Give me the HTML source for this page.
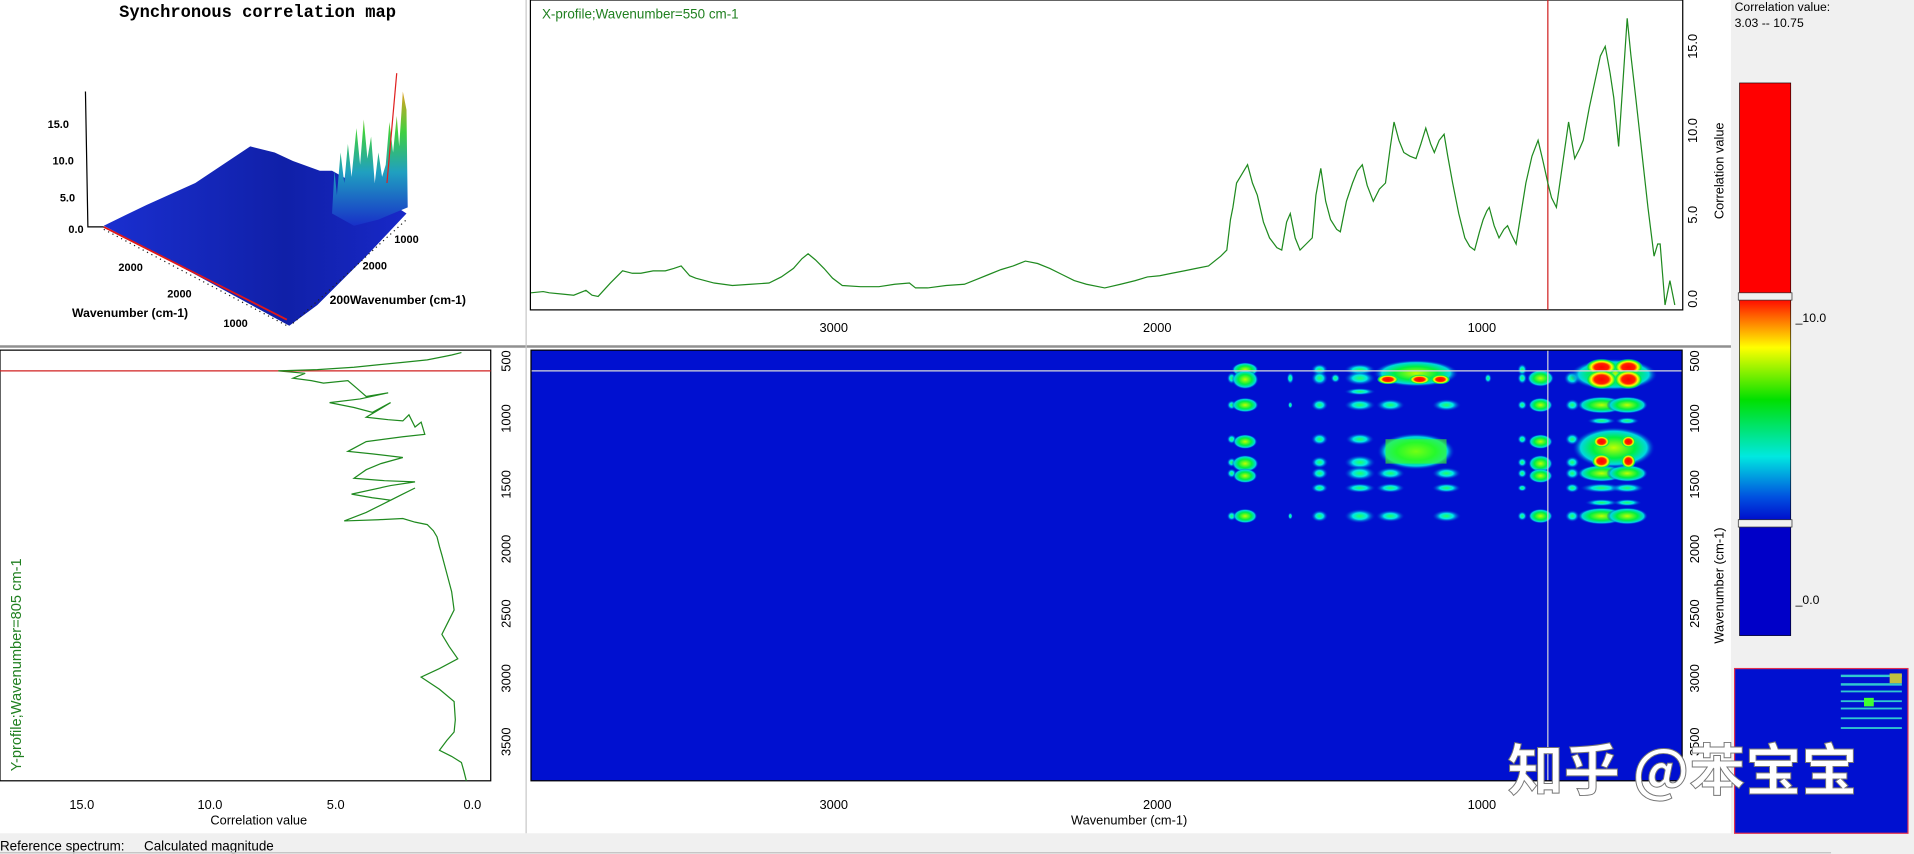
<!DOCTYPE html>
<html><head><meta charset="utf-8"><style>
html,body{margin:0;padding:0;background:#fff;width:1914px;height:854px;overflow:hidden}
svg{display:block}
text{font-family:"Liberation Sans",sans-serif}
</style></head><body>
<svg width="1914" height="854" viewBox="0 0 1914 854" xmlns="http://www.w3.org/2000/svg">
<defs>
<radialGradient id="cy"><stop offset="0" stop-color="#20ff60"/><stop offset="0.45" stop-color="#00e8e8"/><stop offset="1" stop-color="#0010d0" stop-opacity="0"/></radialGradient>
<radialGradient id="gr"><stop offset="0" stop-color="#c0ff00"/><stop offset="0.5" stop-color="#00f040"/><stop offset="0.8" stop-color="#00d8e0"/><stop offset="1" stop-color="#0010d0" stop-opacity="0"/></radialGradient>
<radialGradient id="rd"><stop offset="0" stop-color="#ff0000"/><stop offset="0.45" stop-color="#ff2000"/><stop offset="0.65" stop-color="#ffff00"/><stop offset="0.85" stop-color="#00f040"/><stop offset="1" stop-color="#00d0e0" stop-opacity="0"/></radialGradient>
<linearGradient id="cb" x1="0" y1="0" x2="0" y2="1">
<stop offset="0" stop-color="#ff0000"/><stop offset="0.08" stop-color="#ff6000"/><stop offset="0.22" stop-color="#ffff00"/><stop offset="0.45" stop-color="#00e000"/><stop offset="0.7" stop-color="#00e8e0"/><stop offset="0.88" stop-color="#0050e0"/><stop offset="1" stop-color="#0000c8"/></linearGradient>
<linearGradient id="pl" x1="0" y1="0" x2="1" y2="0"><stop offset="0" stop-color="#1a2fd0"/><stop offset="0.6" stop-color="#1020a8"/><stop offset="1" stop-color="#1828c8"/></linearGradient>
<linearGradient id="sp" x1="0" y1="1" x2="0" y2="0"><stop offset="0" stop-color="#1830c8"/><stop offset="0.4" stop-color="#20a0c0"/><stop offset="0.7" stop-color="#40d040"/><stop offset="1" stop-color="#e0a020"/></linearGradient>
</defs>
<g transform="scale(1.2207 1.22)">
<rect x="1418" y="0" width="150" height="700" fill="#f0f0f0"/>
<rect x="0" y="683" width="1568" height="17" fill="#f0f0f0"/>
<line x1="0" y1="284" x2="1418" y2="284" stroke="#909090" stroke-width="2"/>
<line x1="431" y1="0" x2="431" y2="683" stroke="#c8c8c8" stroke-width="1"/>
<text x="211" y="14" font-weight="bold" font-size="14" text-anchor="middle" style="font-family:'Liberation Mono',monospace">Synchronous correlation map</text>
<!-- 3D plot -->
<polygon points="85,185 120,168 160,150 205,120 225,125 240,132 262,140 272,140 290,150 310,160 333,175 300,210 260,250 237,267 160,225" fill="url(#pl)"/>
<path d="M272,175 L274,140 276,160 279,125 282,150 285,118 288,145 292,105 295,135 298,98 301,130 304,112 307,150 310,125 313,145 316,135 319,100 322,125 325,95 327,120 330,75 333,90 334,170 310,180 290,185 Z" fill="url(#sp)"/>
<line x1="325" y1="60" x2="317" y2="150" stroke="#e02020" stroke-width="1"/>
<line x1="85" y1="186" x2="235" y2="262" stroke="#e01818" stroke-width="1.5"/>
<polyline points="70,75 72,186 85,186" fill="none" stroke="#000" stroke-width="1"/>
<line x1="85" y1="188" x2="237" y2="268" stroke="#222" stroke-width="1" stroke-dasharray="1 3"/>
<line x1="240" y1="265" x2="333" y2="180" stroke="#222" stroke-width="1" stroke-dasharray="1 3"/>
<g font-weight="bold" font-size="9" style="font-family:'Liberation Mono',monospace">
<text x="39" y="105">15.0</text><text x="43" y="135">10.0</text><text x="49" y="165">5.0</text><text x="56" y="191">0.0</text>
<text x="97" y="222">2000</text><text x="137" y="244">2000</text><text x="183" y="268">1000</text>
<text x="59" y="260" font-size="10">Wavenumber (cm-1)</text>
<text x="323" y="199">1000</text><text x="297" y="221">2000</text>
<text x="270" y="249" font-size="10">200Wavenumber (cm-1)</text>
</g>
<!-- X profile -->
<rect x="434.5" y="0" width="944" height="254" fill="none" stroke="#000" stroke-width="1"/>
<text x="444" y="15" fill="#208020" font-size="11">X-profile;Wavenumber=550 cm-1</text>
<line x1="1268" y1="0" x2="1268" y2="254" stroke="#d02020" stroke-width="1"/>
<polyline fill="none" stroke="#1f8a1f" stroke-width="1" points="435,240 445,239 450,240 460,241 470,242 480,238 485,242 490,243 500,232 510,222 518,224 525,224 535,222 545,222 552,220 558,218 565,226 570,228 585,232 600,234 615,233 630,232 640,227 650,220 657,212 662,208 668,213 675,220 682,228 690,234 705,235 720,235 733,233 745,232 750,236 760,236 775,234 790,233 800,229 810,225 820,221 830,218 840,214 850,216 860,220 870,225 880,230 890,233 905,236 918,233 930,230 940,227 950,226 960,224 970,222 980,220 990,218 1000,210 1005,205 1008,180 1010,170 1013,150 1016,145 1022,135 1026,150 1030,160 1035,182 1040,195 1046,203 1050,205 1054,182 1057,175 1061,195 1065,205 1070,200 1075,195 1078,160 1082,138 1086,165 1090,180 1095,188 1098,190 1103,165 1108,150 1112,140 1116,135 1120,152 1125,165 1130,155 1135,150 1139,120 1142,100 1146,115 1150,125 1155,128 1160,130 1164,118 1168,105 1172,118 1175,125 1179,115 1183,110 1186,128 1190,150 1195,175 1200,195 1204,202 1208,205 1212,190 1215,180 1218,173 1220,170 1224,185 1228,195 1232,188 1235,185 1238,192 1242,200 1246,175 1250,150 1255,128 1260,115 1264,132 1268,150 1271,162 1275,170 1280,135 1285,100 1288,118 1290,130 1294,122 1297,115 1302,88 1308,60 1311,46 1315,38 1319,60 1322,80 1324,100 1326,120 1330,60 1333,15 1336,45 1340,80 1345,125 1350,170 1355,210 1358,200 1360,200 1362,225 1364,250 1368,230 1372,250"/>
<g font-size="10.5" fill="#000">
<text x="683" y="272" text-anchor="middle">3000</text><text x="948" y="272" text-anchor="middle">2000</text><text x="1214" y="272" text-anchor="middle">1000</text>
<text transform="translate(1390,245) rotate(-90)" text-anchor="middle">0.0</text>
<text transform="translate(1390,176) rotate(-90)" text-anchor="middle">5.0</text>
<text transform="translate(1390,107) rotate(-90)" text-anchor="middle">10.0</text>
<text transform="translate(1390,38) rotate(-90)" text-anchor="middle">15.0</text>
<text transform="translate(1412,140) rotate(-90)" text-anchor="middle">Correlation value</text>
</g>
<!-- Y profile -->
<rect x="0" y="287" width="402" height="353" fill="none" stroke="#000" stroke-width="1"/>
<line x1="0" y1="304" x2="402" y2="304" stroke="#d02020" stroke-width="1"/>
<polyline fill="none" stroke="#1f8a1f" stroke-width="1" points="378,289 370,291 365,292 350,295 330,297 310,299 290,301 260,303 228,304 250,306 240,310 255,312 265,314 285,312 292,318 300,325 318,322 295,327 270,330 290,334 305,338 320,330 310,336 300,342 318,344 330,345 335,340 340,350 345,346 348,356 330,358 300,362 285,370 305,372 330,375 312,380 300,385 290,392 315,394 340,395 320,398 288,405 305,408 320,410 330,405 340,400 320,410 300,420 282,427 310,426 330,425 340,428 350,430 355,435 358,440 360,448 362,455 366,470 370,485 372,500 367,510 362,520 368,530 375,540 360,548 345,555 360,565 372,575 373,590 372,600 366,607 360,615 370,620 378,625 380,632 382,640"/>
<text transform="translate(17,545) rotate(-90)" text-anchor="middle" fill="#208020" font-size="12">Y-profile;Wavenumber=805 cm-1</text>
<g font-size="10.5" fill="#000">
<text x="67" y="663" text-anchor="middle">15.0</text><text x="172" y="663" text-anchor="middle">10.0</text><text x="275" y="663" text-anchor="middle">5.0</text><text x="387" y="663" text-anchor="middle">0.0</text>
<text x="212" y="676" text-anchor="middle">Correlation value</text>
<text x="925" y="676" text-anchor="middle">Wavenumber (cm-1)</text>
<text x="683" y="663" text-anchor="middle">3000</text><text x="948" y="663" text-anchor="middle">2000</text><text x="1214" y="663" text-anchor="middle">1000</text>
</g>
<g font-size="10.5" fill="#000">
<text transform="translate(418,296) rotate(-90)" text-anchor="middle">500</text>
<text transform="translate(418,343) rotate(-90)" text-anchor="middle">1000</text>
<text transform="translate(418,397) rotate(-90)" text-anchor="middle">1500</text>
<text transform="translate(418,450) rotate(-90)" text-anchor="middle">2000</text>
<text transform="translate(418,503) rotate(-90)" text-anchor="middle">2500</text>
<text transform="translate(418,556) rotate(-90)" text-anchor="middle">3000</text>
<text transform="translate(418,608) rotate(-90)" text-anchor="middle">3500</text>
<text transform="translate(1392,296) rotate(-90)" text-anchor="middle">500</text>
<text transform="translate(1392,343) rotate(-90)" text-anchor="middle">1000</text>
<text transform="translate(1392,397) rotate(-90)" text-anchor="middle">1500</text>
<text transform="translate(1392,450) rotate(-90)" text-anchor="middle">2000</text>
<text transform="translate(1392,503) rotate(-90)" text-anchor="middle">2500</text>
<text transform="translate(1392,556) rotate(-90)" text-anchor="middle">3000</text>
<text transform="translate(1392,608) rotate(-90)" text-anchor="middle">3500</text>
<text transform="translate(1412,480) rotate(-90)" text-anchor="middle">Wavenumber (cm-1)</text>
</g>
<!-- Heatmap -->
<rect x="435" y="287" width="943" height="353" fill="#0010d0"/>
<g fill="url(#cy)">
<ellipse cx="1009" cy="310" rx="4" ry="5"/><ellipse cx="1009" cy="332" rx="4" ry="4"/><ellipse cx="1009" cy="360" rx="4" ry="4"/><ellipse cx="1009" cy="379" rx="4" ry="4"/><ellipse cx="1009" cy="388" rx="4" ry="4"/><ellipse cx="1009" cy="423" rx="4" ry="4"/>
<ellipse cx="1057" cy="310" rx="3" ry="5"/><ellipse cx="1057" cy="332" rx="2" ry="3"/><ellipse cx="1057" cy="423" rx="2" ry="3"/>
<ellipse cx="1081" cy="303" rx="7" ry="5"/><ellipse cx="1081" cy="310" rx="7" ry="6"/><ellipse cx="1081" cy="332" rx="7" ry="5"/><ellipse cx="1081" cy="360" rx="7" ry="5"/><ellipse cx="1081" cy="379" rx="7" ry="5"/><ellipse cx="1081" cy="388" rx="7" ry="5"/><ellipse cx="1081" cy="400" rx="7" ry="4"/><ellipse cx="1081" cy="423" rx="7" ry="5"/>
<ellipse cx="1094" cy="310" rx="4" ry="4"/>
<ellipse cx="1114" cy="303" rx="13" ry="5"/><ellipse cx="1114" cy="310" rx="13" ry="6"/><ellipse cx="1114" cy="321" rx="13" ry="3"/><ellipse cx="1114" cy="332" rx="13" ry="5"/><ellipse cx="1114" cy="360" rx="12" ry="5"/><ellipse cx="1114" cy="379" rx="13" ry="6"/><ellipse cx="1114" cy="388" rx="13" ry="6"/><ellipse cx="1114" cy="400" rx="13" ry="4"/><ellipse cx="1114" cy="423" rx="13" ry="6"/>
<ellipse cx="1139" cy="332" rx="12" ry="5"/><ellipse cx="1139" cy="388" rx="12" ry="5"/><ellipse cx="1139" cy="400" rx="12" ry="4"/><ellipse cx="1139" cy="423" rx="12" ry="5"/>
<ellipse cx="1185" cy="332" rx="12" ry="5"/><ellipse cx="1185" cy="388" rx="12" ry="5"/><ellipse cx="1185" cy="400" rx="12" ry="4"/><ellipse cx="1185" cy="423" rx="12" ry="5"/>
<ellipse cx="1219" cy="310" rx="3" ry="4"/>
<ellipse cx="1247" cy="303" rx="4" ry="5"/><ellipse cx="1247" cy="310" rx="4" ry="5"/><ellipse cx="1247" cy="332" rx="4" ry="4"/><ellipse cx="1247" cy="360" rx="4" ry="4"/><ellipse cx="1247" cy="379" rx="4" ry="4"/><ellipse cx="1247" cy="388" rx="4" ry="4"/><ellipse cx="1247" cy="400" rx="4" ry="3"/><ellipse cx="1247" cy="423" rx="4" ry="4"/>
<ellipse cx="1288" cy="310" rx="7" ry="6"/><ellipse cx="1288" cy="332" rx="6" ry="5"/><ellipse cx="1288" cy="360" rx="6" ry="5"/><ellipse cx="1288" cy="379" rx="6" ry="5"/><ellipse cx="1288" cy="388" rx="6" ry="5"/><ellipse cx="1288" cy="400" rx="6" ry="4"/><ellipse cx="1288" cy="423" rx="6" ry="5"/>
<ellipse cx="1312" cy="400" rx="18" ry="4"/><ellipse cx="1333" cy="400" rx="14" ry="4"/><ellipse cx="1312" cy="412" rx="14" ry="3"/><ellipse cx="1333" cy="412" rx="12" ry="3"/>
<ellipse cx="1312" cy="345" rx="12" ry="3"/><ellipse cx="1333" cy="345" rx="10" ry="3"/>
</g>
<g fill="url(#gr)">
<ellipse cx="1020" cy="303" rx="11" ry="6"/><ellipse cx="1020" cy="311" rx="11" ry="8"/><ellipse cx="1020" cy="332" rx="11" ry="6"/><ellipse cx="1020" cy="362" rx="10" ry="6"/><ellipse cx="1020" cy="380" rx="11" ry="7"/><ellipse cx="1020" cy="390" rx="10" ry="6"/><ellipse cx="1020" cy="423" rx="10" ry="6"/>
<ellipse cx="1160" cy="306" rx="35" ry="11"/>
<ellipse cx="1160" cy="370" rx="32" ry="15"/>
<ellipse cx="1262" cy="310" rx="11" ry="7"/><ellipse cx="1262" cy="332" rx="10" ry="6"/><ellipse cx="1262" cy="362" rx="10" ry="6"/><ellipse cx="1262" cy="380" rx="10" ry="7"/><ellipse cx="1262" cy="390" rx="10" ry="6"/><ellipse cx="1262" cy="423" rx="10" ry="6"/>
<ellipse cx="1312" cy="332" rx="20" ry="7"/><ellipse cx="1333" cy="332" rx="17" ry="7"/>
<ellipse cx="1312" cy="388" rx="20" ry="7"/><ellipse cx="1333" cy="388" rx="17" ry="7"/>
<ellipse cx="1312" cy="423" rx="20" ry="7"/><ellipse cx="1333" cy="423" rx="17" ry="7"/>
<ellipse cx="1322" cy="367" rx="34" ry="17"/>
<ellipse cx="1322" cy="307" rx="36" ry="13"/>
</g>
<rect x="1135" y="360" width="50" height="20" fill="#40ff20" opacity="0.6"/>
<g fill="url(#rd)">
<ellipse cx="1137" cy="311" rx="9" ry="4"/><ellipse cx="1163" cy="311" rx="9" ry="4"/><ellipse cx="1180" cy="311" rx="8" ry="4"/>
<ellipse cx="1312" cy="301" rx="13" ry="7"/><ellipse cx="1334" cy="301" rx="12" ry="7"/>
<ellipse cx="1312" cy="311" rx="13" ry="8"/><ellipse cx="1334" cy="311" rx="12" ry="8"/>
<ellipse cx="1312" cy="362" rx="7" ry="5"/><ellipse cx="1334" cy="362" rx="6" ry="5"/>
<ellipse cx="1312" cy="378" rx="8" ry="6"/><ellipse cx="1334" cy="378" rx="6" ry="6"/>
</g>
<line x1="435" y1="304" x2="1378" y2="304" stroke="#d8d8d8" stroke-width="1"/>
<line x1="1268" y1="287" x2="1268" y2="640" stroke="#d8d8d8" stroke-width="1"/>
<rect x="435" y="287" width="943" height="353" fill="none" stroke="#000" stroke-width="1"/>
<!-- colorbar -->
<text x="1421" y="9" font-size="10">Correlation value:</text>
<text x="1421" y="22" font-size="10">3.03 -- 10.75</text>
<rect x="1425" y="68" width="42" height="176" fill="#ff0000" stroke="#000" stroke-width="0.5"/>
<rect x="1425" y="244" width="42" height="186" fill="url(#cb)" stroke="#000" stroke-width="0.5"/>
<rect x="1425" y="430" width="42" height="91" fill="#0000c8" stroke="#000" stroke-width="0.5"/>
<rect x="1424" y="240" width="44" height="6" fill="#f0f0f0" stroke="#333" stroke-width="0.6"/>
<rect x="1424" y="426" width="44" height="6" fill="#f0f0f0" stroke="#333" stroke-width="0.6"/>
<text x="1471" y="264" font-size="10">_10.0</text>
<text x="1471" y="495" font-size="10">_0.0</text>
<!-- thumbnail -->
<rect x="1421" y="548" width="142" height="135" fill="#0010d0" stroke="#e03050" stroke-width="1"/>
<g fill="#30c8d0">
<rect x="1508" y="553" width="50" height="2"/><rect x="1508" y="560" width="50" height="2"/><rect x="1508" y="566" width="50" height="1.5"/><rect x="1508" y="574" width="50" height="1.5"/><rect x="1508" y="580" width="50" height="1.5"/><rect x="1508" y="588" width="50" height="1.5"/><rect x="1508" y="596" width="50" height="1.5"/>
</g>
<rect x="1527" y="572" width="8" height="7" fill="#40ff30"/>
<rect x="1548" y="552" width="10" height="8" fill="#c0c040"/>
<!-- watermark -->
<text x="1235" y="648" font-size="46" font-weight="bold" fill="#fff" stroke="#777" stroke-width="0.8" style="font-family:'Noto Sans CJK SC',sans-serif">知乎 @苯宝宝</text>
<text x="0" y="697" font-size="11">Reference spectrum:</text>
<text x="118" y="697" font-size="11">Calculated magnitude</text>
<line x1="0" y1="699" x2="1500" y2="699" stroke="#c0c0c0"/>
</g>
</svg>
</body></html>
